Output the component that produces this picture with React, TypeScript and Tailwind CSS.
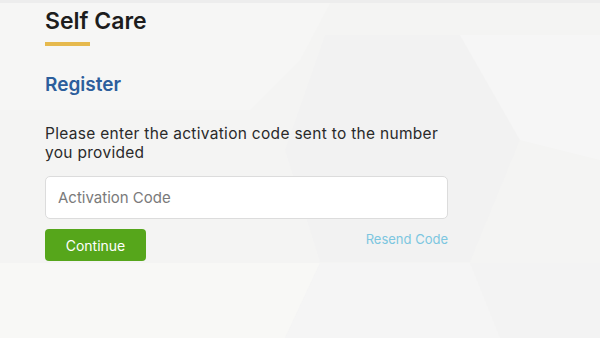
import { useState } from "react";

// faint hexagon pattern behind the form
function HexBackdrop() {
  return (
    <svg
      className="absolute inset-0 h-full w-full"
      viewBox="0 0 600 338"
      preserveAspectRatio="none"
      aria-hidden
    >
      <rect width="600" height="338" fill="#f4f4f3" />
      <polygon points="0,0 600,0 600,3 0,3" fill="#ededed" />
      <polygon points="0,3 330,3 300,60 250,110 0,110" fill="#f6f6f5" />
      <polygon points="325,35 460,35 520,140 470,262 320,262 285,150" fill="#f2f2f2" />
      <polygon points="460,35 600,35 600,160 520,140" fill="#f6f6f6" />
      <polygon points="0,263 320,263 285,338 0,338" fill="#f8f8f6" />
      <polygon points="320,263 470,263 500,338 285,338" fill="#f5f5f5" />
      <polygon points="470,263 600,263 600,338 500,338" fill="#f3f3f3" />
    </svg>
  );
}

export default function App() {
  const [code, setCode] = useState("");

  return (
    <div className="relative h-[338px] w-[600px] overflow-hidden font-['Inter',sans-serif]">
      <HexBackdrop />

      <div className="relative flex flex-col pl-[45px] pt-[6px]">
        {/* Page title */}
        <h1 className="text-[23px] font-semibold leading-[30px] text-[#1d1d1d]">Self Care</h1>
        <div className="mt-[6px] h-[4px] w-[45px] bg-[#e6b94d]"></div>

        <h2 className="mt-[27px] text-[19px] font-semibold leading-[24px] text-[#2c5e9c]">Register</h2>

        <p className="mt-[27px] w-[400px] text-[15.5px] leading-[19px] tracking-[0.3px] text-[#2a2a2a]">
          Please enter the activation code sent to the number you provided
        </p>

        {/* Activation form */}
        <input
          value={code}
          onChange={(e) => setCode(e.target.value)}
          placeholder="Activation Code"
          className="mt-[14px] h-[43px] w-[403px] rounded-[5px] border border-[#dcdcdc] bg-white px-[12px] text-[15px] text-[#333] placeholder:text-[#7a7a7a] outline-none"
        />

        <div className="mt-[10px] flex w-[403px] items-start justify-between">
          <button className="h-[32px] w-[101px] rounded-[4px] bg-[#56a61b] text-[14px] text-white">
            Continue
          </button>
          <button className="mt-[1px] text-[13px] leading-[18px] text-[#7cc6e0]">Resend Code</button>
        </div>
      </div>
    </div>
  );
}
